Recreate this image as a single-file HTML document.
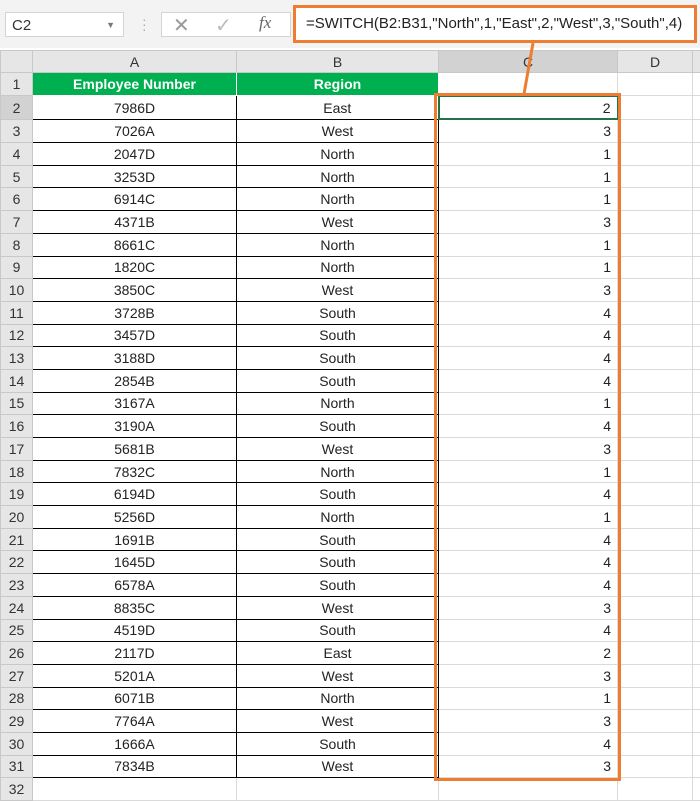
<!DOCTYPE html>
<html><head><style>
body{margin:0;width:700px;height:785px;overflow:hidden;background:#fff;font-family:"Liberation Sans",sans-serif;position:relative}
.abs{position:absolute}
table{border-collapse:collapse;position:absolute;left:0;top:50px;table-layout:fixed;width:712px}
td{height:21.7px;padding:0;font-size:14px;text-align:center;border:1px solid #dadada;color:#222;white-space:nowrap;overflow:hidden}
tr.h td{height:21px;background:#e6e6e6;color:#333;border-color:#c8c8c8;font-size:14px}
td.rh{background:#e6e6e6;color:#333;border-color:#c8c8c8}
td.g{background:#00b050;color:#fff;font-weight:bold;border-color:#fff}
td.b{border:1px solid #000}
td.c{text-align:right;padding-right:6px}
</style></head><body>
<div class="abs" style="left:0;top:0;width:700px;height:48px;background:#f3f3f3"></div>
<div class="abs" style="left:5px;top:12px;width:119px;height:25px;background:#fff;border:1px solid #d4d4d4;font-size:15px;line-height:25px;padding-left:6px;box-sizing:border-box;color:#333">C2<span style="position:absolute;right:8px;top:0;font-size:9px;color:#777">▼</span></div>
<div class="abs" style="left:142px;top:17px;color:#aaa;font-size:14px;line-height:5px">·<br>·<br>·</div>
<div class="abs" style="left:161px;top:12px;width:130px;height:25px;background:#fff;border:1px solid #d4d4d4;box-sizing:border-box"></div>
<div class="abs" style="left:173px;top:13px;font-size:20px;color:#999">✕</div>
<div class="abs" style="left:215px;top:13px;font-size:20px;color:#bbb">✓</div>
<div class="abs" style="left:259px;top:13px;font-size:17px;font-style:italic;font-family:'Liberation Serif',serif;color:#666">fx</div>
<div class="abs" style="left:296px;top:8px;width:398px;height:32px;background:#fff;font-size:15px;line-height:32px;padding-left:10px;box-sizing:border-box;color:#222;white-space:nowrap">=SWITCH(B2:B31,"North",1,"East",2,"West",3,"South",4)</div>
<div class="abs" style="left:293px;top:5px;width:404px;height:38px;border:3px solid #ed7d31;box-sizing:border-box"></div>
<table>
<colgroup><col style="width:32px"><col style="width:204px"><col style="width:202px"><col style="width:179px"><col style="width:75px"><col style="width:20px"></colgroup>
<tr class="h"><td></td><td>A</td><td>B</td><td style="background:#d2d2d2">C</td><td>D</td><td></td></tr>
<tr><td class="rh">1</td><td class="g">Employee Number</td><td class="g">Region</td><td></td><td></td><td></td></tr>
<tr><td class="rh" style="background:#d2d2d2">2</td><td class="b">7986D</td><td class="b">East</td><td class="c" style="border:2px solid #217346">2</td><td></td><td></td></tr>
<tr><td class="rh">3</td><td class="b">7026A</td><td class="b">West</td><td class="c">3</td><td></td><td></td></tr>
<tr><td class="rh">4</td><td class="b">2047D</td><td class="b">North</td><td class="c">1</td><td></td><td></td></tr>
<tr><td class="rh">5</td><td class="b">3253D</td><td class="b">North</td><td class="c">1</td><td></td><td></td></tr>
<tr><td class="rh">6</td><td class="b">6914C</td><td class="b">North</td><td class="c">1</td><td></td><td></td></tr>
<tr><td class="rh">7</td><td class="b">4371B</td><td class="b">West</td><td class="c">3</td><td></td><td></td></tr>
<tr><td class="rh">8</td><td class="b">8661C</td><td class="b">North</td><td class="c">1</td><td></td><td></td></tr>
<tr><td class="rh">9</td><td class="b">1820C</td><td class="b">North</td><td class="c">1</td><td></td><td></td></tr>
<tr><td class="rh">10</td><td class="b">3850C</td><td class="b">West</td><td class="c">3</td><td></td><td></td></tr>
<tr><td class="rh">11</td><td class="b">3728B</td><td class="b">South</td><td class="c">4</td><td></td><td></td></tr>
<tr><td class="rh">12</td><td class="b">3457D</td><td class="b">South</td><td class="c">4</td><td></td><td></td></tr>
<tr><td class="rh">13</td><td class="b">3188D</td><td class="b">South</td><td class="c">4</td><td></td><td></td></tr>
<tr><td class="rh">14</td><td class="b">2854B</td><td class="b">South</td><td class="c">4</td><td></td><td></td></tr>
<tr><td class="rh">15</td><td class="b">3167A</td><td class="b">North</td><td class="c">1</td><td></td><td></td></tr>
<tr><td class="rh">16</td><td class="b">3190A</td><td class="b">South</td><td class="c">4</td><td></td><td></td></tr>
<tr><td class="rh">17</td><td class="b">5681B</td><td class="b">West</td><td class="c">3</td><td></td><td></td></tr>
<tr><td class="rh">18</td><td class="b">7832C</td><td class="b">North</td><td class="c">1</td><td></td><td></td></tr>
<tr><td class="rh">19</td><td class="b">6194D</td><td class="b">South</td><td class="c">4</td><td></td><td></td></tr>
<tr><td class="rh">20</td><td class="b">5256D</td><td class="b">North</td><td class="c">1</td><td></td><td></td></tr>
<tr><td class="rh">21</td><td class="b">1691B</td><td class="b">South</td><td class="c">4</td><td></td><td></td></tr>
<tr><td class="rh">22</td><td class="b">1645D</td><td class="b">South</td><td class="c">4</td><td></td><td></td></tr>
<tr><td class="rh">23</td><td class="b">6578A</td><td class="b">South</td><td class="c">4</td><td></td><td></td></tr>
<tr><td class="rh">24</td><td class="b">8835C</td><td class="b">West</td><td class="c">3</td><td></td><td></td></tr>
<tr><td class="rh">25</td><td class="b">4519D</td><td class="b">South</td><td class="c">4</td><td></td><td></td></tr>
<tr><td class="rh">26</td><td class="b">2117D</td><td class="b">East</td><td class="c">2</td><td></td><td></td></tr>
<tr><td class="rh">27</td><td class="b">5201A</td><td class="b">West</td><td class="c">3</td><td></td><td></td></tr>
<tr><td class="rh">28</td><td class="b">6071B</td><td class="b">North</td><td class="c">1</td><td></td><td></td></tr>
<tr><td class="rh">29</td><td class="b">7764A</td><td class="b">West</td><td class="c">3</td><td></td><td></td></tr>
<tr><td class="rh">30</td><td class="b">1666A</td><td class="b">South</td><td class="c">4</td><td></td><td></td></tr>
<tr><td class="rh">31</td><td class="b">7834B</td><td class="b">West</td><td class="c">3</td><td></td><td></td></tr>
<tr><td class="rh">32</td><td></td><td></td><td></td><td></td><td></td></tr>
</table>
<div class="abs" style="left:434px;top:93px;width:187px;height:688px;border:3px solid #ed7d31;box-sizing:border-box"></div>
<svg class="abs" style="left:0;top:0" width="700" height="100"><line x1="533" y1="43" x2="524" y2="94" stroke="#ed7d31" stroke-width="3"/></svg>
</body></html>
